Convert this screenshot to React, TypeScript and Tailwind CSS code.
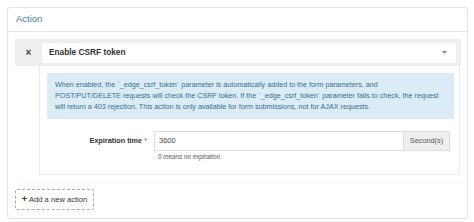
import React from "react";

export default function App() {
  return (
    <div
      className="w-[474px] h-[222px] bg-white pt-[7px] pl-[7px] pr-[6px]"
      style={{ fontFamily: '"Liberation Sans", Arial, sans-serif' }}
    >
      <div className="w-[461px] h-[212px] border border-[#e3e3e3] rounded-[3px] bg-white flex flex-col">
        <div className="h-[24px] border-b border-[#e6e6e6] flex items-center pl-[8px] text-[9.5px] text-[#4a7aa6]">
          Action
        </div>
        <div className="pt-[7px] pl-[7px] pr-[7px]">
          <div className="w-[446px]">
            <div className="h-[27px] bg-[#eeeeee] flex items-center">
              <div className="w-[27px] flex justify-center text-[10px] font-bold text-[#444]">
                ×
              </div>
              <div className="w-[414px] h-[20px] bg-white flex items-center justify-between pl-[7px] pr-[9px]">
                <span className="text-[8.3px] font-bold text-[#333]">Enable CSRF token</span>
                <svg width="5" height="3" viewBox="0 0 5 3">
                  <path d="M0 0 L5 0 L2.5 3 Z" fill="#888" />
                </svg>
              </div>
            </div>
            <div className="ml-[24px] w-[421px] h-[109px] border border-t-0 border-[#eaeaea] pt-[7px] pl-[7px] pr-[5px]">
              <div className="h-[46px] bg-[#dbecf7] text-[#31708f] text-[7.2px] leading-[11px] pl-[8px] pt-[6px] rounded-[2px] whitespace-nowrap">
                When enabled, the `_edge_csrf_token` parameter is automatically added to the form parameters, and
                <br />
                POST/PUT/DELETE requests will check the CSRF token. If the `_edge_csrf_token` parameter fails to check, the request
                <br />
                will return a 403 rejection. This action is only available for form submissions, not for AJAX requests.
              </div>
              <div className="mt-[12px] flex">
                <div className="w-[107px] h-[20px] flex items-center justify-end text-[7.3px] font-bold text-[#333] pr-[7px]">
                  Expiration time<span className="text-[#c9302c] font-normal ml-[2px]">*</span>
                </div>
                <div className="flex flex-col">
                  <div className="flex h-[20px]">
                    <div className="w-[250px] border border-[#ddd] flex items-center pl-[4px] text-[7.5px] text-[#444]">
                      3600
                    </div>
                    <div className="w-[46px] border border-l-0 border-[#ddd] bg-[#eeeeee] flex items-center justify-center text-[7.3px] text-[#555]">
                      Second(s)
                    </div>
                  </div>
                  <div className="pl-[4px] mt-[1px] text-[6.3px] italic text-[#555]">0 means no expiration.</div>
                </div>
              </div>
            </div>
          </div>
          <div className="mt-[7px] ml-[8px] w-[440px] border-t border-dotted border-[#eeeeee]" />
          <div className="mt-[6px] w-[79px] h-[21px] border border-dashed border-[#aaa] rounded-[2px] flex items-center justify-center text-[7.6px] text-[#333]">
            <span className="font-bold mr-[2px] text-[9px]">+</span>Add a new action
          </div>
        </div>
      </div>
    </div>
  );
}
